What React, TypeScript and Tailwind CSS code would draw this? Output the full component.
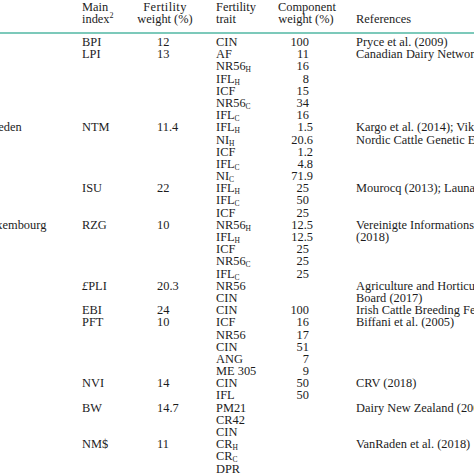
import React from "react";

type T = string | [string, string];
type Row = { c?: string; i?: string; fw?: string; t: T; cw?: string; r?: string };

const rows: Row[] = [
  { c: "Australia", i: "BPI", fw: "12", t: "CIN", cw: "100", r: "Pryce et al. (2009)" },
  { c: "Canada", i: "LPI", fw: "13", t: "AF", cw: "11", r: "Canadian Dairy Network (2018)" },
  { t: ["NR56", "H"], cw: "16" },
  { t: ["IFL", "H"], cw: "8" },
  { t: "ICF", cw: "15" },
  { t: ["NR56", "C"], cw: "34" },
  { t: ["IFL", "C"], cw: "16" },
  { c: "Denmark, Finland, Sweden", i: "NTM", fw: "11.4", t: ["IFL", "H"], cw: "1.5", r: "Kargo et al. (2014); Viking Genetics (2017);" },
  { t: ["NI", "H"], cw: "20.6", r: "Nordic Cattle Genetic Evaluation (2018)" },
  { t: "ICF", cw: "1.2" },
  { t: ["IFL", "C"], cw: "4.8" },
  { t: ["NI", "C"], cw: "71.9" },
  { c: "France", i: "ISU", fw: "22", t: ["IFL", "H"], cw: "25", r: "Mourocq (2013); Launay (2018)" },
  { t: ["IFL", "C"], cw: "50" },
  { t: "ICF", cw: "25" },
  { c: "Germany, Austria,  Luxembourg", i: "RZG", fw: "10", t: ["NR56", "H"], cw: "12.5", r: "Vereinigte Informationssysteme Tierhaltung" },
  { t: ["IFL", "H"], cw: "12.5", r: "(2018)" },
  { t: "ICF", cw: "25" },
  { t: ["NR56", "C"], cw: "25" },
  { t: ["IFL", "C"], cw: "25" },
  { c: "United Kingdom", i: "£PLI", fw: "20.3", t: "NR56", r: "Agriculture and Horticulture Development" },
  { t: "CIN", r: "Board (2017)" },
  { c: "Ireland", i: "EBI", fw: "24", t: "CIN", cw: "100", r: "Irish Cattle Breeding Federation (2018)" },
  { c: "Italy", i: "PFT", fw: "10", t: "ICF", cw: "16", r: "Biffani et al. (2005)" },
  { t: "NR56", cw: "17" },
  { t: "CIN", cw: "51" },
  { t: "ANG", cw: "7" },
  { t: "ME 305", cw: "9" },
  { c: "Netherlands", i: "NVI", fw: "14", t: "CIN", cw: "50", r: "CRV (2018)" },
  { t: "IFL", cw: "50" },
  { c: "New Zealand", i: "BW", fw: "14.7", t: "PM21", r: "Dairy New Zealand (2009)" },
  { t: "CR42" },
  { t: "CIN" },
  { c: "United States", i: "NM$", fw: "11", t: ["CR", "H"], r: "VanRaden et al. (2018)" },
  { t: ["CR", "C"] },
  { t: "DPR" },
];

function Trait({ t }: { t: T }) {
  if (typeof t === "string") return <>{t}</>;
  return (
    <>
      {t[0]}
      <span className="relative top-[2px] text-[7.5px]">{t[1]}</span>
    </>
  );
}

function Index({ i }: { i?: string }) {
  if (!i) return null;
  if (i.startsWith("£"))
    return (
      <>
        <span className="italic">£</span>
        {i.slice(1)}
      </>
    );
  return <>{i}</>;
}

export default function App() {
  return (
    <div className="w-[474px] h-[474px] overflow-hidden bg-white text-[#1c1c1c] text-[12.4px] leading-[12.2px] font-['Liberation_Serif',serif]">
      <div className="ml-[-114px] w-[800px] pt-[1px]">
        <div className="flex h-[31px]">
          <div className="w-[196px] shrink-0" />
          <div className="w-[55px] shrink-0">
            <div>Main</div>
            <div>
              index<sup className="text-[8px] top-[-5px]">2</sup>
            </div>
          </div>
          <div className="w-[79px] shrink-0">
            <div className="w-[56px] text-center">
              <div className="tracking-[0.4px]">Fertility</div>
              <div>weight (%)</div>
            </div>
          </div>
          <div className="w-[62px] shrink-0">
            <div>Fertility</div>
            <div>trait</div>
          </div>
          <div className="w-[78px] shrink-0">
            <div className="w-[56px] text-center">
              <div>Component</div>
              <div>weight (%)</div>
            </div>
          </div>
          <div className="flex-1">
            <div>&nbsp;</div>
            <div>References</div>
          </div>
        </div>
        <div className="h-[2px] bg-[#7cc9ba]" />
        <div className="pt-[2px]">
          {rows.map((row, k) => (
            <div key={k} className="flex h-[12.2px] whitespace-pre">
              <div className="w-[196px] shrink-0">{row.c}</div>
              <div className="w-[55px] shrink-0">
                <Index i={row.i} />
              </div>
              <div className="w-[79px] shrink-0 pl-[20px]">{row.fw}</div>
              <div className="w-[62px] shrink-0">
                <Trait t={row.t} />
              </div>
              <div className="w-[78px] shrink-0">
                <div
                  className={
                    row.cw && row.cw.includes(".")
                      ? "w-[35px] text-right"
                      : "w-[31px] text-right"
                  }
                >
                  {row.cw}
                </div>
              </div>
              <div className="flex-1">{row.r}</div>
            </div>
          ))}
        </div>
      </div>
    </div>
  );
}
